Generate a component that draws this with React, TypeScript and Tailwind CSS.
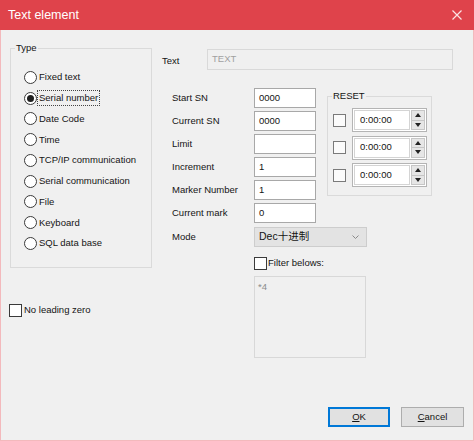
import React from "react";

const font = "font-['Liberation_Sans','Noto_Sans_CJK_SC',sans-serif]";

function Radio({ label, checked, focused }: { label: string; checked?: boolean; focused?: boolean }) {
  return (
    <div className="flex items-center h-[20.75px]">
      <span className="w-[13px] h-[13px] rounded-full border border-[#3a3a3a] bg-white flex items-center justify-center shrink-0">
        {checked && <span className="w-[7px] h-[7px] rounded-full bg-[#1f1f1f]" />}
      </span>
      <span
        className={
          "px-[1px] leading-[14px] border border-dotted whitespace-nowrap " +
          (focused ? "border-[#444]" : "border-transparent")
        }
      >
        {label}
      </span>
    </div>
  );
}

function Box({ className = "" }: { className?: string }) {
  return <span className={"w-[13px] h-[13px] border border-[#3a3a3a] bg-white shrink-0 " + className} />;
}

function Field({ label, value, className = "" }: { label: string; value: string; className?: string }) {
  return (
    <div className={"flex items-center h-[20px] " + className}>
      <span className="w-[82px] whitespace-nowrap">{label}</span>
      <div className="w-[62px] h-[20px] border border-[#a8a8a8] bg-white flex items-center pl-[4px]">{value}</div>
    </div>
  );
}

function Spin() {
  return (
    <div className="flex items-center">
      <span className="w-[13px] h-[13px] border border-[#7a7a7a] bg-[#fbfbfb] shrink-0" />
      <div className="ml-[6px] w-[75px] h-[24px] border border-[#b4b4b4] bg-white flex items-center p-[1px]">
        <div className="flex-1 h-full border border-[#d4d4d4] flex items-center pl-[5px]">0:00:00</div>
        <div className="w-[14px] h-full flex flex-col ml-[1px]">
          <div className="flex-1 bg-[#e6e6e6] border border-[#c6c6c6] flex items-center justify-center">
            <svg width="6" height="4" viewBox="0 0 6 4">
              <path d="M0 4 L3 0 L6 4 Z" fill="#222" />
            </svg>
          </div>
          <div className="flex-1 bg-[#e6e6e6] border border-[#c6c6c6] border-t-0 flex items-center justify-center">
            <svg width="6" height="4" viewBox="0 0 6 4">
              <path d="M0 0 L3 4 L6 0 Z" fill="#222" />
            </svg>
          </div>
        </div>
      </div>
    </div>
  );
}

export default function App() {
  return (
    <div className={"w-[474px] h-[441px] flex flex-col bg-[#f0f0f0] text-[9.5px] text-[#141414] " + font}>
      <div className="h-[30px] bg-[#df434b] flex items-center justify-between pl-[8px] pr-[12px] shrink-0">
        <span className="text-white text-[12.5px] font-['Liberation_Sans',sans-serif]">Text element</span>
        <svg width="10" height="10" viewBox="0 0 10 10">
          <path d="M0.5 0.5 L9.5 9.5 M9.5 0.5 L0.5 9.5" stroke="#fbe3e4" strokeWidth="1.2" />
        </svg>
      </div>
      <div className="flex-1 flex flex-col border-x border-b border-[#f3b9bc]">
        <div className="flex">
          {/* Left column */}
          <div className="w-[142px] ml-[9px] flex flex-col shrink-0">
            <fieldset className="mt-[12px] h-[226px] border border-[#dadada] pl-[13px] pt-[13px]">
              <legend className="ml-[-9px] px-[1px] leading-[12px]">Type</legend>
              <Radio label="Fixed text" />
              <Radio label="Serial number" checked focused />
              <Radio label="Date Code" />
              <Radio label="Time" />
              <Radio label="TCP/IP communication" />
              <Radio label="Serial communication" />
              <Radio label="File" />
              <Radio label="Keyboard" />
              <Radio label="SQL data base" />
            </fieldset>
            <div className="mt-[36px] flex items-center ml-[-1px] h-[13px]">
              <Box />
              <span className="ml-[2px]">No leading zero</span>
            </div>
          </div>

          {/* Right column */}
          <div className="ml-[10px] flex flex-col">
            <div className="mt-[19px] flex items-center h-[21px]">
              <span className="w-[45px] pt-[3px]">Text</span>
              <div className="w-[246px] h-[21px] border border-[#d9d9d9] bg-[#f0f0f0] flex items-center pl-[4px] text-[#a0a0a0]">
                TEXT
              </div>
            </div>
            <div className="mt-[18px] ml-[10px] flex flex-col">
              <div className="flex items-start">
                <div className="flex flex-col gap-[3px]">
                  <Field label="Start SN" value="0000" />
                  <Field label="Current SN" value="0000" />
                  <Field label="Limit" value="" />
                  <Field label="Increment" value="1" />
                  <Field label="Marker Number" value="1" />
                  <Field label="Current mark" value="0" />
                </div>
                <fieldset className="ml-[11px] mt-[2px] w-[105px] h-[106px] border border-[#dadada] pl-[5px] pt-[6px] flex flex-col gap-[3.5px]">
                  <legend className="ml-[-1px] px-[1px] leading-[12px]">RESET</legend>
                  <Spin />
                  <Spin />
                  <Spin />
                </fieldset>
              </div>
              <div className="mt-[4px] flex items-center h-[20px]">
                <span className="w-[82px]">Mode</span>
                <div className="w-[113px] h-[20px] bg-[#e3e3e3] border border-[#cdcdcd] flex items-center justify-between pl-[4px] pr-[7px]">
                  <span className="text-[10.5px]">Dec十进制</span>
                  <svg width="7" height="4" viewBox="0 0 7 4">
                    <path d="M0.5 0.5 L3.5 3.5 L6.5 0.5" stroke="#8a8a8a" strokeWidth="1" fill="none" />
                  </svg>
                </div>
              </div>
              <div className="mt-[10px] ml-[82px] flex items-center h-[13px]">
                <Box />
                <span className="ml-[1px]">Filter belows:</span>
              </div>
              <div className="mt-[6px] ml-[82px] w-[112px] h-[82px] border border-[#d8d8d8] bg-[#f0f0f0] pl-[3px] pt-[3px] text-[#8c8c8c]">
                *4
              </div>
            </div>
          </div>
        </div>

        <div className="mt-auto mb-[13px] flex justify-end pr-[9px] gap-[11px]">
          <button className="w-[62px] h-[20px] bg-[#e1e1e1] border border-[#0078d7] shadow-[inset_0_0_0_1px_#0078d7] flex items-center justify-center">
            <span>
              <span className="underline">O</span>K
            </span>
          </button>
          <button className="w-[63px] h-[20px] bg-[#e1e1e1] border border-[#adadad] flex items-center justify-center">
            <span>
              <span className="underline">C</span>ancel
            </span>
          </button>
        </div>
      </div>
    </div>
  );
}
